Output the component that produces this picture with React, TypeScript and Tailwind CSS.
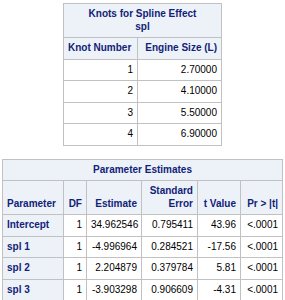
const knots = [
  { n: 1, size: "2.70000" },
  { n: 2, size: "4.10000" },
  { n: 3, size: "5.50000" },
  { n: 4, size: "6.90000" },
]

const estimates = [
  { name: "Intercept", df: 1, est: "34.962546", se: "0.795411", t: "43.96", p: "<.0001" },
  { name: "spl 1", df: 1, est: "-4.996964", se: "0.284521", t: "-17.56", p: "<.0001" },
  { name: "spl 2", df: 1, est: "2.204879", se: "0.379784", t: "5.81", p: "<.0001" },
  { name: "spl 3", df: 1, est: "-3.903298", se: "0.906609", t: "-4.31", p: "<.0001" },
]

const th = "border border-[#c1c1c1] bg-[#edf2f9] text-[#112277] font-bold px-[4px] py-[4px] leading-[12.5px] align-bottom"
const td = "border border-[#c1c1c1] bg-white text-black text-right px-[4px] py-[4px] leading-[12.5px]"

export default function App() {
  return (
    <div className="min-h-[300px] bg-white pt-[3px] flex flex-col items-center gap-[13px] font-['Liberation_Sans',Arial,sans-serif] text-[10px]">
      <table className="border-collapse table-fixed w-[158px]">
        <colgroup>
          <col className="w-[74px]" />
          <col className="w-[84px]" />
        </colgroup>
        <thead>
          <tr>
            <th colSpan={2} className={`${th} text-center`}>
              Knots for Spline Effect
              <br />
              spl
            </th>
          </tr>
          <tr>
            <th className={`${th} text-left py-[4.5px]`}>Knot Number</th>
            <th className={`${th} text-right py-[4.5px]`}>Engine Size (L)</th>
          </tr>
        </thead>
        <tbody>
          {knots.map((k) => (
            <tr key={k.n}>
              <td className={td}>{k.n}</td>
              <td className={td}>{k.size}</td>
            </tr>
          ))}
        </tbody>
      </table>

      <table className="border-collapse table-fixed w-[280px]">
        <colgroup>
          <col className="w-[61px]" />
          <col className="w-[23px]" />
          <col className="w-[55px]" />
          <col className="w-[56px]" />
          <col className="w-[43px]" />
          <col className="w-[42px]" />
        </colgroup>
        <thead>
          <tr>
            <th colSpan={6} className={`${th} text-center`}>
              Parameter Estimates
            </th>
          </tr>
          <tr>
            <th className={`${th} text-left`}>Parameter</th>
            <th className={`${th} text-right`}>DF</th>
            <th className={`${th} text-right`}>Estimate</th>
            <th className={`${th} text-right`}>
              Standard
              <br />
              Error
            </th>
            <th className={`${th} text-right`}>t Value</th>
            <th className={`${th} text-right`}>Pr &gt; |t|</th>
          </tr>
        </thead>
        <tbody>
          {estimates.map((r) => (
            <tr key={r.name}>
              <th className={`${th} text-left align-middle`}>{r.name}</th>
              <td className={td}>{r.df}</td>
              <td className={td}>{r.est}</td>
              <td className={td}>{r.se}</td>
              <td className={td}>{r.t}</td>
              <td className={td}>{r.p}</td>
            </tr>
          ))}
        </tbody>
      </table>
    </div>
  )
}
